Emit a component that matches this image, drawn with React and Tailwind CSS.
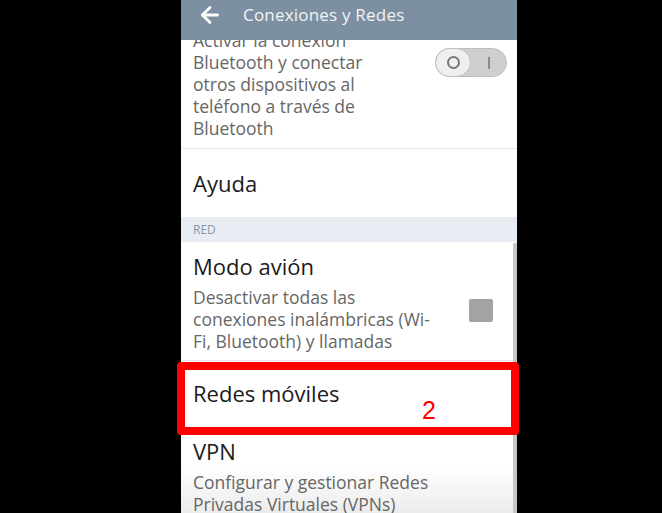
import React from 'react';
import { ArrowLeft } from 'lucide-react';

const font = { fontFamily: '"Open Sans", "Noto Sans", sans-serif' };

const Toggle = () => (
    <div className="relative w-[72px] h-[29px] rounded-full bg-[#cfcfcf] border border-[#bdbdbd] shrink-0">
        <div className="absolute right-[16px] top-[8px] w-[2px] h-[12px] bg-[#8a8a8a]" />
        <div className="absolute left-[-1px] top-[-1px] w-[36px] h-[29px] rounded-full bg-[#efefef] border border-[#bdbdbd] flex items-center justify-center">
            <div className="w-[13px] h-[13px] rounded-full border-2 border-[#777]" />
        </div>
    </div>
);

const Divider = () => <div className="h-px bg-[#e6e6e6]" />;

export default function App() {
    return (
        <div className="w-full h-[513px] bg-black overflow-hidden" style={font}>
            <div className="relative ml-[181px] w-[336px] h-[513px] bg-white overflow-hidden">
                {/* top bar */}
                <div className="absolute top-0 left-0 right-0 z-10 h-[40px] bg-[#7c90a2] flex items-center pb-[10px]">
                    <ArrowLeft size={26} strokeWidth={2.6} className="text-white ml-[16px]" />
                    <span className="ml-[20px] text-[17px] text-[#f3f3f3] tracking-[0.2px]">Conexiones y Redes</span>
                </div>

                {/* bluetooth, scrolled under the bar */}
                <div className="flex items-start justify-between pl-[12px] pr-[10px] pt-[29px] pb-[9px]">
                    <div className="text-[17.5px] leading-[22px] text-[#666]">
                        <div>Activar la conexión</div>
                        <div>Bluetooth y conectar</div>
                        <div>otros dispositivos al</div>
                        <div>teléfono a través de</div>
                        <div>Bluetooth</div>
                    </div>
                    <div className="mt-[19px]">
                        <Toggle />
                    </div>
                </div>
                <Divider />

                <div className="h-[68px] flex items-center pl-[12px]">
                    <span className="text-[22px] text-[#1b1b1b]">Ayuda</span>
                </div>

                <div className="h-[25px] bg-[#e8edf3] flex items-center pl-[12px]">
                    <span className="text-[12px] text-[#8a96a2]">RED</span>
                </div>

                <div className="flex items-start justify-between pl-[12px] pr-[24px] pt-[10px] pb-[8px]">
                    <div>
                        <div className="text-[22px] leading-[28px] text-[#1b1b1b]">Modo avión</div>
                        <div className="mt-[6px] text-[17.5px] leading-[22px] text-[#666]">
                            <div>Desactivar todas las</div>
                            <div>conexiones inalámbricas (Wi-</div>
                            <div>Fi, Bluetooth) y llamadas</div>
                        </div>
                    </div>
                    <div className="mt-[47px] w-[24px] h-[23px] rounded-[2px] bg-[#a3a3a3]" />
                </div>
                <Divider />

                <div className="h-[68px] pl-[12px] pt-[18px]">
                    <div className="text-[22px] leading-[28px] text-[#1b1b1b]">Redes móviles</div>
                </div>
                <Divider />

                <div className="pl-[12px] pt-[7px] h-[90px] bg-gradient-to-b from-white from-40% to-[#e9e9e9]">
                    <div className="text-[22px] leading-[28px] text-[#1b1b1b]">VPN</div>
                    <div className="mt-[6px] text-[17.5px] leading-[22px] text-[#666]">
                        <div>Configurar y gestionar Redes</div>
                        <div>Privadas Virtuales (VPNs)</div>
                    </div>
                </div>

                {/* scrollbar */}
                <div className="absolute right-0 top-[243px] bottom-0 w-[4px] bg-[#c6c6c6]" />
            </div>

            {/* annotation */}
            <div className="absolute left-[177px] top-[362px] w-[342px] h-[73px] border-[8px] border-[#ff0000] rounded-[4px]">
                <span className="absolute left-[237px] top-[28px] text-[25px] leading-[25px] text-[#ff0000]" style={{ fontFamily: '"Liberation Sans", sans-serif' }}>2</span>
            </div>
        </div>
    );
}
